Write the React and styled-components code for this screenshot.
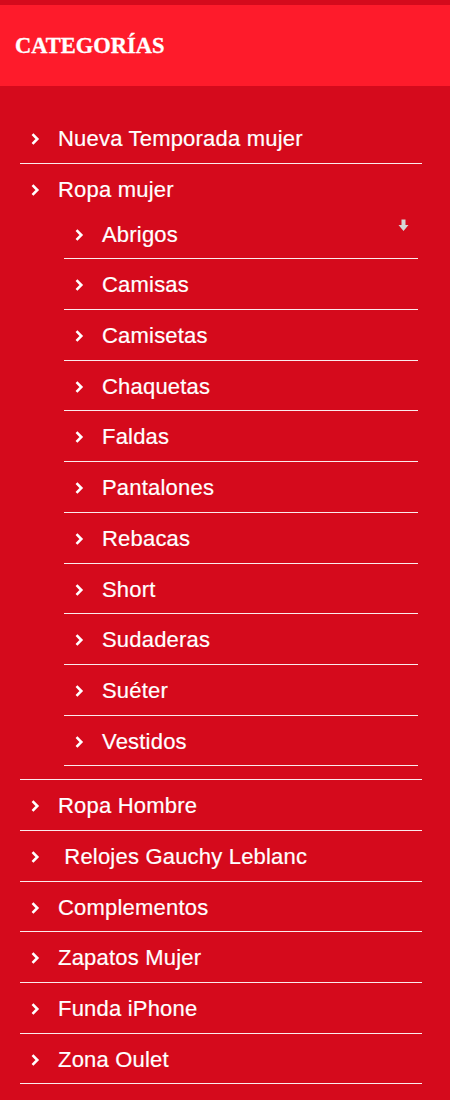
import React from "react";
import styled, { createGlobalStyle } from "styled-components";

const GlobalStyle = createGlobalStyle`
  html, body {
    margin: 0;
    padding: 0;
    background: #ffffff;
  }
  body {
    font-family: "Liberation Sans", Arial, sans-serif;
  }
`;

const Panel = styled.aside`
  width: 450px;
  background: #d50a1c;
  padding-top: 5px;
  padding-bottom: 17px;
  position: relative;
`;

const Header = styled.div`
  height: 81px;
  background: #fe1b2b;
  display: flex;
  align-items: center;
  padding: 0 15px;
  box-sizing: border-box;
`;

const Title = styled.h2`
  margin: 0;
  color: #fff;
  font-family: "Liberation Serif", "Times New Roman", serif;
  font-weight: 700;
  font-size: 22.5px;
  -webkit-text-stroke: 0.3px #fff;
`;

const Menu = styled.ul`
  list-style: none;
  margin: 0;
  padding: 27px 28px 0 20px;
`;

const SubMenu = styled.ul`
  list-style: none;
  margin: 7px 0 0 0;
  padding: 0 4px 13px 44px;
`;

const Item = styled.li`
  border-bottom: 1px solid rgba(255, 255, 255, 0.92);
  position: relative;
`;

const Link = styled.a`
  display: flex;
  align-items: center;
  color: #fff;
  text-decoration: none;
  font-size: 22px;
  letter-spacing: 0.2px;
  -webkit-text-stroke: 0.2px #fff;
  line-height: 24px;
  padding: ${(p) => (p.$open ? "14px 0 0" : "14px 0 11.7px")};
  padding-left: 10px;
  white-space: pre;
`;

const Chevron = styled.svg`
  width: 10px;
  height: 14px;
  margin-right: 18px;
  flex-shrink: 0;
`;

const ScrollArrow = styled.svg`
  position: absolute;
  right: 9px;
  top: 9px;
  width: 11px;
  height: 14px;
`;

function Arrow() {
  return (
    <Chevron viewBox="0 0 10 14">
      <polyline points="2.5,2.2 7.3,7 2.5,11.8" fill="none" stroke="#fff" strokeWidth="2.6" />
    </Chevron>
  );
}

const subs = [
  "Abrigos",
  "Camisas",
  "Camisetas",
  "Chaquetas",
  "Faldas",
  "Pantalones",
  "Rebacas",
  "Short",
  "Sudaderas",
  "Suéter",
  "Vestidos",
];

const after = [
  "Ropa Hombre",
  " Relojes Gauchy Leblanc",
  "Complementos",
  "Zapatos Mujer",
  "Funda iPhone",
  "Zona Oulet",
];

export default function App() {
  return (
    <>
      <GlobalStyle />
      <Panel>
        <Header>
          <Title>CATEGORÍAS</Title>
        </Header>
        <Menu>
          <Item>
            <Link href="#">
              <Arrow />
              Nueva Temporada mujer
            </Link>
          </Item>
          <Item>
            <Link href="#" $open>
              <Arrow />
              Ropa mujer
            </Link>
            <SubMenu>
              {subs.map((s, i) => (
                <Item key={s}>
                  <Link href="#">
                    <Arrow />
                    {s}
                  </Link>
                  {i === 0 && (
                    <ScrollArrow viewBox="0 0 11 14">
                      <path d="M3.5 1.5h4v5.5h3l-5 6-5-6h3z" fill="#d6d6d6" />
                    </ScrollArrow>
                  )}
                </Item>
              ))}
            </SubMenu>
          </Item>
          {after.map((s) => (
            <Item key={s}>
              <Link href="#">
                <Arrow />
                {s}
              </Link>
            </Item>
          ))}
        </Menu>
      </Panel>
    </>
  );
}
